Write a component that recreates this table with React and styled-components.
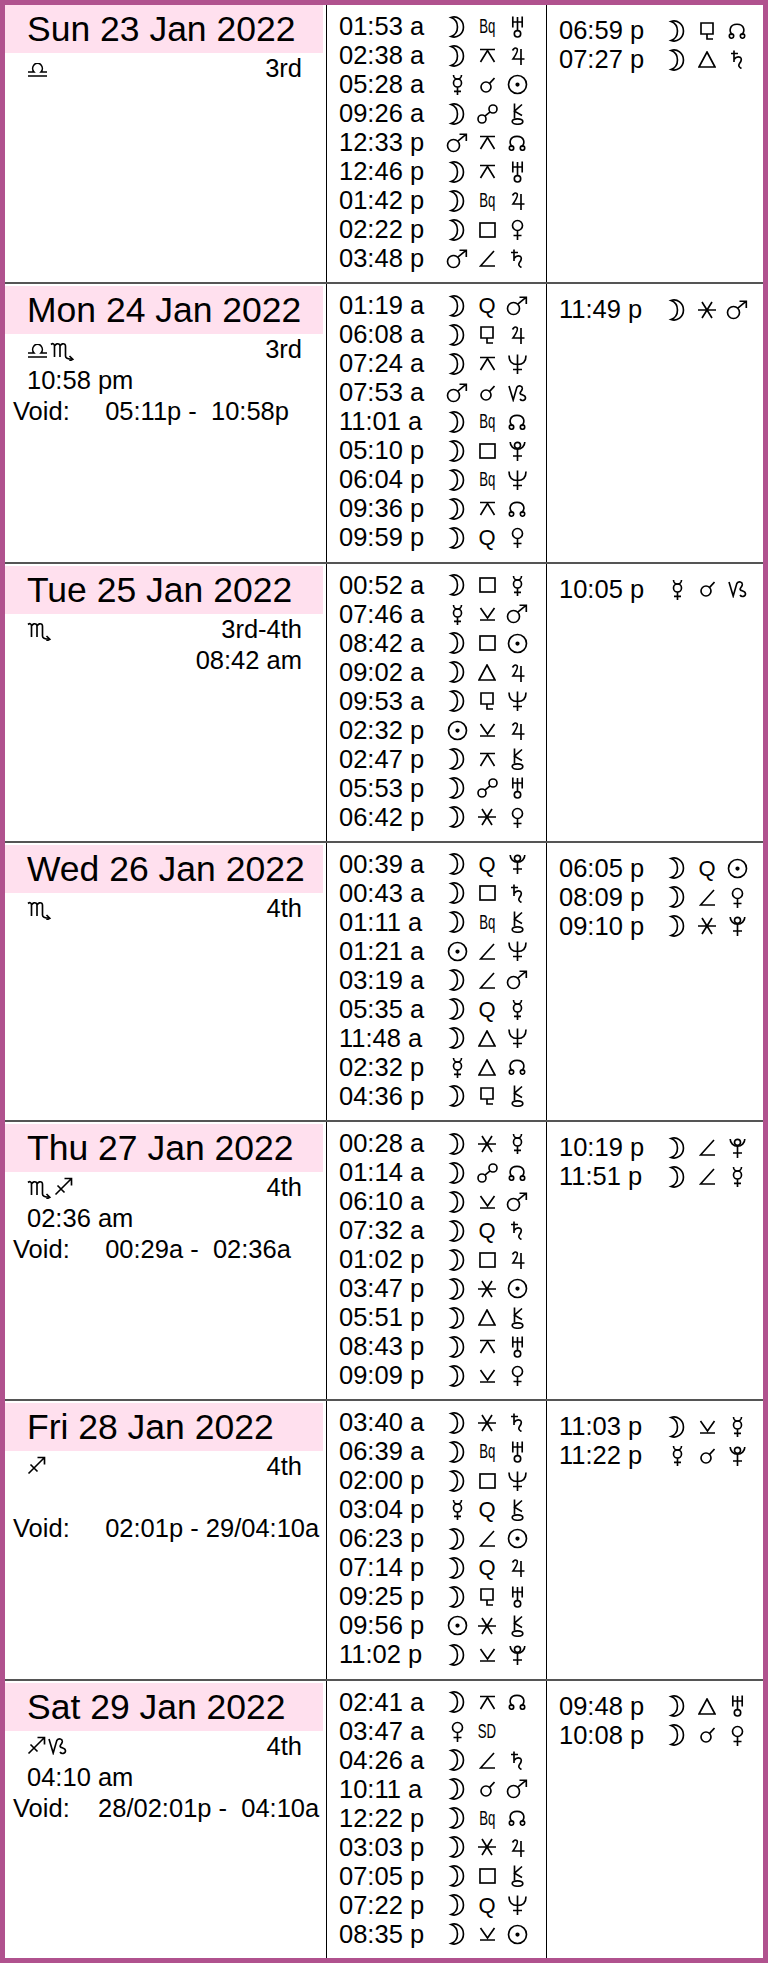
import React from 'react'
import styled, { createGlobalStyle } from 'styled-components'

const GlobalStyle = createGlobalStyle`
  body {
    margin: 0;
    background: #fff;
  }
`

// astro glyphs drawn as small stroked icons: [width, height, shapes, drop below baseline]
const ICONS = {
  Mo: [18, 22, <path d="M3 1.5 A9.5 10 0 1 1 3 20.5 A9.4 10 0 0 0 3 1.5 Z" />],
  Su: [21, 21, <>
    <circle cx="10.5" cy="10.5" r="9" />
    <circle cx="10.5" cy="10.5" r="1.3" fill="#000" />
  </>],
  Me: [15, 21, <>
    <path d="M3.5 1 A4 4 0 0 0 11.5 1" />
    <circle cx="7.5" cy="9" r="4" />
    <path d="M7.5 13 V21 M4 17.3 H11" />
  </>],
  Ve: [13, 21, <>
    <circle cx="6.5" cy="6.5" r="5" />
    <path d="M6.5 11.5 V21 M2.5 16.5 H10.5" />
  </>],
  Ma: [22, 20, <>
    <circle cx="7.5" cy="12.5" r="6" />
    <path d="M11.8 8.2 L20.3 1.2 M13.5 1.2 H20.3 V8" />
  </>],
  Ju: [15, 19, <path d="M2.5 4.5 Q4.5 0.8 7 2.6 Q8.8 4.6 3 13 H14.5 M11 3 V19" />],
  Sa: [15, 19, <path d="M4 0.5 V12 M1 3.5 H8 M4 9.5 Q7 5.5 10.5 7.5 Q12.5 9.5 9.5 13.5 Q7.5 16.5 11.5 18.5" />],
  Ur: [13, 22, <>
    <path d="M1.8 0.5 V11.5 M11.2 0.5 V11.5 M1.8 6 H11.2 M6.5 1 V14.5" />
    <circle cx="6.5" cy="17.8" r="3.2" />
  </>],
  Ne: [21, 20, <path d="M2 1.5 Q2 10.5 10.5 10.5 Q19 10.5 19 1.5 M10.5 0.5 V20 M6 15.5 H15" />],
  Pl: [21, 20, <>
    <path d="M3.2 1 A7.3 7.3 0 0 0 17.8 1" />
    <circle cx="10.5" cy="4.3" r="3" />
    <path d="M10.5 8.3 V20 M6 15 H15" />
  </>],
  Ch: [15, 22, <>
    <path d="M4.5 0.5 V15.5 M12 1.5 L4.5 8.2 L12 12.5" />
    <ellipse cx="7.5" cy="18.5" rx="5.3" ry="2.7" />
  </>],
  No: [18, 16, <>
    <path d="M4.5 12 C0.5 8.5 1.5 1.3 9 1.3 C16.5 1.3 17.5 8.5 13.5 12" />
    <circle cx="3.5" cy="13" r="2.2" />
    <circle cx="14.5" cy="13" r="2.2" />
  </>],
  Cp: [19, 18, <path d="M1 2 L5.2 16 L8.8 3.5 C10.5 1 14.8 1.5 14.2 5 C13.6 8 11 8.5 12.5 10 C14 11 17.5 11 17.5 13.8 C17.5 16.8 13.5 17.3 12 15" />],
  Li: [21, 14, <path d="M1 13 H20 M1 9 H7 A4.8 5.2 0 1 1 14 9 H20" />],
  Sc: [25, 20, <path d="M1 3.5 Q3.5 1.5 4.5 4.5 V16 M4.5 5 Q7 1.5 9.5 3.5 Q10 4 10 5.5 V16 M10 5 Q12.5 1.5 15 3.5 Q15.5 4 15.5 5.5 V15 Q15.5 18.2 22.5 18.2 M19.5 15 L22.8 18.2 L19.5 20" />, 3],
  Sg: [19, 19, <path d="M1.5 17.5 L17.5 1.5 M10.5 1.5 H17.5 V8.5 M3.5 8.5 L10.5 15.5" />],
  cnj: [15, 16, <>
    <circle cx="6" cy="10" r="5" />
    <path d="M9.6 6.4 L14.5 1" />
  </>],
  opp: [21, 20, <>
    <circle cx="5" cy="15" r="4" />
    <circle cx="16" cy="5" r="4" />
    <path d="M7.9 12.1 L13.1 7.9" />
  </>],
  sqr: [17, 16, <rect x="1" y="1" width="15" height="14" />],
  tri: [18, 17, <path d="M9 1 L17 16 H1 Z" />],
  sxt: [20, 18, <path d="M1 9 H19 M5 1 L15 17 M15 1 L5 17" />],
  ssx: [17, 14, <path d="M1.5 1 L8.5 11 L15.5 1 M1 13 H16" />],
  qcx: [17, 15, <path d="M1 1.5 H16 M1.5 14 L8.5 2.5 L15.5 14" />],
  ssq: [17, 17, <path d="M15 1 L1.5 16 H16" />],
  sesq: [15, 18, <path d="M1 1 H13 V12 H1 Z M7 12 V17 H13" />],
}

const days = [
  {
    date: 'Sun 23 Jan 2022', signs: ['Li'], phase: '3rd',
    events: [
      '01:53 a|Mo|Bq|Ur', '02:38 a|Mo|qcx|Ju', '05:28 a|Me|cnj|Su', '09:26 a|Mo|opp|Ch',
      '12:33 p|Ma|qcx|No', '12:46 p|Mo|qcx|Ur', '01:42 p|Mo|Bq|Ju', '02:22 p|Mo|sqr|Ve',
      '03:48 p|Ma|ssq|Sa',
    ],
    late: ['06:59 p|Mo|sesq|No', '07:27 p|Mo|tri|Sa'],
  },
  {
    date: 'Mon 24 Jan 2022', signs: ['Li', 'Sc'], phase: '3rd', ingress: '10:58 pm',
    voidText: 'Void:     05:11p -  10:58p',
    events: [
      '01:19 a|Mo|Q|Ma', '06:08 a|Mo|sesq|Ju', '07:24 a|Mo|qcx|Ne', '07:53 a|Ma|cnj|Cp',
      '11:01 a|Mo|Bq|No', '05:10 p|Mo|sqr|Pl', '06:04 p|Mo|Bq|Ne', '09:36 p|Mo|qcx|No',
      '09:59 p|Mo|Q|Ve',
    ],
    late: ['11:49 p|Mo|sxt|Ma'],
  },
  {
    date: 'Tue 25 Jan 2022', signs: ['Sc'], phase: '3rd-4th', ingress: '08:42 am', ingressRight: true,
    events: [
      '00:52 a|Mo|sqr|Me', '07:46 a|Me|ssx|Ma', '08:42 a|Mo|sqr|Su', '09:02 a|Mo|tri|Ju',
      '09:53 a|Mo|sesq|Ne', '02:32 p|Su|ssx|Ju', '02:47 p|Mo|qcx|Ch', '05:53 p|Mo|opp|Ur',
      '06:42 p|Mo|sxt|Ve',
    ],
    late: ['10:05 p|Me|cnj|Cp'],
  },
  {
    date: 'Wed 26 Jan 2022', signs: ['Sc'], phase: '4th',
    events: [
      '00:39 a|Mo|Q|Pl', '00:43 a|Mo|sqr|Sa', '01:11 a|Mo|Bq|Ch', '01:21 a|Su|ssq|Ne',
      '03:19 a|Mo|ssq|Ma', '05:35 a|Mo|Q|Me', '11:48 a|Mo|tri|Ne', '02:32 p|Me|tri|No',
      '04:36 p|Mo|sesq|Ch',
    ],
    late: ['06:05 p|Mo|Q|Su', '08:09 p|Mo|ssq|Ve', '09:10 p|Mo|sxt|Pl'],
  },
  {
    date: 'Thu 27 Jan 2022', signs: ['Sc', 'Sg'], phase: '4th', ingress: '02:36 am',
    voidText: 'Void:     00:29a -  02:36a',
    events: [
      '00:28 a|Mo|sxt|Me', '01:14 a|Mo|opp|No', '06:10 a|Mo|ssx|Ma', '07:32 a|Mo|Q|Sa',
      '01:02 p|Mo|sqr|Ju', '03:47 p|Mo|sxt|Su', '05:51 p|Mo|tri|Ch', '08:43 p|Mo|qcx|Ur',
      '09:09 p|Mo|ssx|Ve',
    ],
    late: ['10:19 p|Mo|ssq|Pl', '11:51 p|Mo|ssq|Me'],
  },
  {
    date: 'Fri 28 Jan 2022', signs: ['Sg'], phase: '4th', ingress: '',
    voidText: 'Void:     02:01p - 29/04:10a',
    events: [
      '03:40 a|Mo|sxt|Sa', '06:39 a|Mo|Bq|Ur', '02:00 p|Mo|sqr|Ne', '03:04 p|Me|Q|Ch',
      '06:23 p|Mo|ssq|Su', '07:14 p|Mo|Q|Ju', '09:25 p|Mo|sesq|Ur', '09:56 p|Su|sxt|Ch',
      '11:02 p|Mo|ssx|Pl',
    ],
    late: ['11:03 p|Mo|ssx|Me', '11:22 p|Me|cnj|Pl'],
  },
  {
    date: 'Sat 29 Jan 2022', signs: ['Sg', 'Cp'], phase: '4th', ingress: '04:10 am',
    voidText: 'Void:    28/02:01p -  04:10a',
    events: [
      '02:41 a|Mo|qcx|No', '03:47 a|Ve|SD|', '04:26 a|Mo|ssq|Sa', '10:11 a|Mo|cnj|Ma',
      '12:22 p|Mo|Bq|No', '03:03 p|Mo|sxt|Ju', '07:05 p|Mo|sqr|Ch', '07:22 p|Mo|Q|Ne',
      '08:35 p|Mo|ssx|Su',
    ],
    late: ['09:48 p|Mo|tri|Ur', '10:08 p|Mo|cnj|Ve'],
  },
]

const Frame = styled.div`
  box-sizing: border-box;
  width: 768px;
  height: 1963px;
  border: 5px solid #b0528e;
  background: #fff;
  display: flex;
  flex-direction: column;
  font-family: "Liberation Sans", Arial, sans-serif;
  color: #000;
`

const InfoCell = styled.div`
  border-right: 1px solid #000;
  padding-right: 3px;
  padding-top: 2px;
`

const DayRow = styled.div`
  flex: 1 1 0;
  display: grid;
  grid-template-columns: 322px 220px 1fr;
  & + & {
    border-top: 2px solid #555;
  }
  &:first-child ${InfoCell} {
    padding-top: 0;
  }
`

const DateBar = styled.div`
  height: 48px;
  line-height: 48px;
  background: #ffe0ee;
  font-size: 35.5px;
  padding-left: 22px;
  white-space: nowrap;
`

const InfoLine = styled.div`
  display: flex;
  justify-content: ${p => (p.$right ? 'flex-end' : 'space-between')};
  height: 31px;
  line-height: 31px;
  font-size: 25.5px;
  padding: 0 21px 0 22px;
  white-space: pre;
`

const SignGlyphs = styled.span`
  svg + svg {
    margin-left: 2px;
  }
`

const VoidLine = styled.div`
  height: 31px;
  line-height: 31px;
  font-size: 25.5px;
  padding-left: 8px;
  white-space: pre;
`

const EventCell = styled.div`
  padding-top: ${p => p.$top}px;
  border-right: ${p => (p.$divider ? '1px solid #000' : 'none')};
`

const EventRow = styled.div`
  display: grid;
  grid-template-columns: 103px 30px 30px 30px;
  padding-left: 12px;
  height: 29px;
  line-height: 29px;
`

const Time = styled.span`
  font-size: 25.5px;
  white-space: pre;
`

const Glyph = styled.span`
  display: flex;
  align-items: center;
  justify-content: center;
  height: 29px;
`

const Letter = styled.span`
  font-size: 22px;
  line-height: 29px;
`

const Tag = styled.span`
  display: inline-block;
  font-size: 20px;
  line-height: 29px;
  color: #000;
  transform: scaleX(0.66);
`

const Icon = ({ name }) => {
  const [w, h, shapes, drop = 0] = ICONS[name]
  return (
    <svg
      width={w}
      height={h}
      viewBox={`0 0 ${w} ${h}`}
      fill="none"
      stroke="#000"
      strokeWidth="1.65"
      style={drop ? { verticalAlign: -drop } : undefined}
    >
      {shapes}
    </svg>
  )
}

const renderGlyph = key => {
  if (!key) return null
  if (key === 'Q') return <Letter>Q</Letter>
  if (key === 'Bq' || key === 'SD') return <Tag>{key}</Tag>
  return <Icon name={key} />
}

const Event = ({ line }) => {
  const [time, a, asp, b] = line.split('|')
  return (
    <EventRow>
      <Time>{time}</Time>
      <Glyph>{renderGlyph(a)}</Glyph>
      <Glyph>{renderGlyph(asp)}</Glyph>
      <Glyph>{renderGlyph(b)}</Glyph>
    </EventRow>
  )
}

const Day = ({ day }) => (
  <DayRow>
    <InfoCell>
      <DateBar>{day.date}</DateBar>
      <InfoLine>
        <SignGlyphs>
          {day.signs.map(s => <Icon key={s} name={s} />)}
        </SignGlyphs>
        <span>{day.phase}</span>
      </InfoLine>
      {day.ingress !== undefined && (
        <InfoLine $right={day.ingressRight}>{day.ingress}</InfoLine>
      )}
      {day.voidText && <VoidLine>{day.voidText}</VoidLine>}
    </InfoCell>
    <EventCell $top={7} $divider>
      {day.events.map(e => <Event key={e} line={e} />)}
    </EventCell>
    <EventCell $top={11}>
      {day.late.map(e => <Event key={e} line={e} />)}
    </EventCell>
  </DayRow>
)

const App = () => (
  <>
    <GlobalStyle />
    <Frame>
      {days.map(d => <Day key={d.date} day={d} />)}
    </Frame>
  </>
)

export default App
